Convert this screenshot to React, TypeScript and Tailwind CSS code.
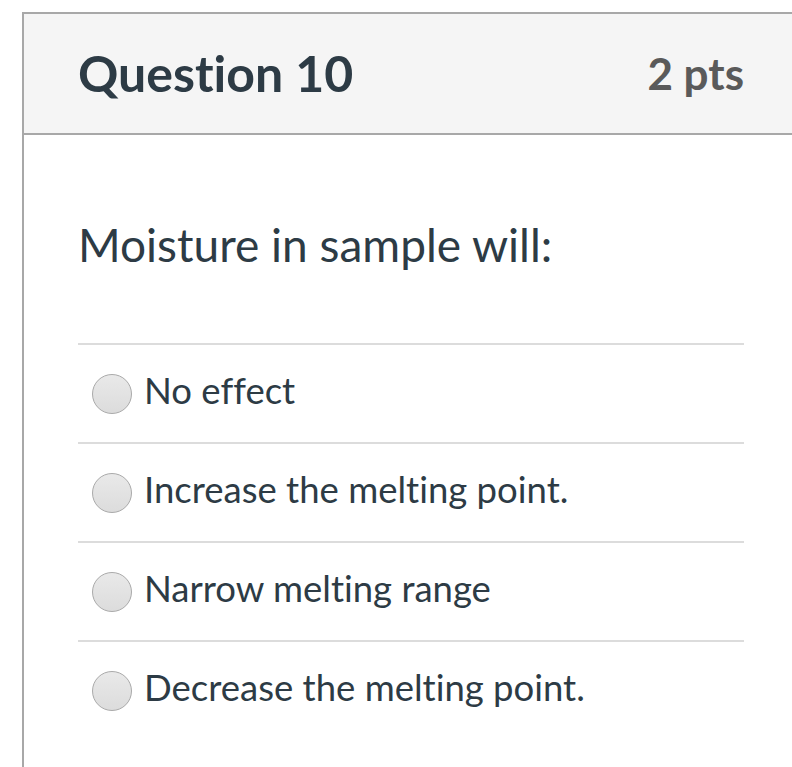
const answers = [
  "No effect",
  "Increase the melting point.",
  "Narrow melting range",
  "Decrease the melting point.",
];

export default function App() {
  return (
    <div
      className="h-[767px] w-[792px] overflow-hidden bg-white pl-[22px] pt-[12px] [font-variant-ligatures:none]"
      style={{ fontFamily: "Lato, 'Open Sans', sans-serif" }}
    >
      <div className="min-h-[800px] w-[776px] border-l-2 border-t-2 border-[#a8a8a8]">
        <div className="flex h-[121px] items-center justify-between border-b-2 border-[#a8a8a8] bg-[#f5f5f5] px-[54px] pb-[2px]">
          <h2 className="text-[50px] font-bold leading-none text-[#2d3b45]">
            Question 10
          </h2>
          <span className="text-[44px] font-bold leading-none text-[#5a5a5a]">
            2 pts
          </span>
        </div>

        <div className="px-[54px] pt-[87px]">
          <p className="text-[46px] leading-none text-[#2d3b45]">
            Moisture in sample will:
          </p>

          <div className="mt-[75px]">
            {answers.map((a) => (
              <div
                key={a}
                className="flex h-[99px] items-center border-t-2 border-[#dcdcdc] pl-[14px]"
              >
                <span className="h-[40px] w-[40px] shrink-0 rounded-full border border-[#a9a9a9] bg-[linear-gradient(#e9e9e9,#dcdcdc)]" />
                <span className="mb-[7px] ml-[12px] text-[36.5px] leading-none text-[#2d3b45]">
                  {a}
                </span>
              </div>
            ))}
          </div>
        </div>
      </div>
    </div>
  );
}
